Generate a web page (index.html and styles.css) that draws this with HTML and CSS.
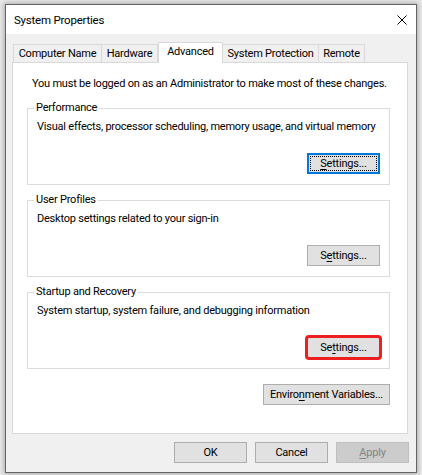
FILE: index.html
```html
<!DOCTYPE html>
<html lang="en">
<head>
<meta charset="utf-8">
<title>System Properties</title>
<link rel="stylesheet" href="styles.css">
</head>
<body>
<div class="window">
  <div class="titlebar">
    <span class="title">System Properties</span>
    <span class="close"><svg width="10" height="10" viewBox="0 0 10 10"><path d="M0.5 0.5 L9.5 9.5 M9.5 0.5 L0.5 9.5" stroke="#000" stroke-width="1" fill="none"/></svg></span>
  </div>
  <div class="client">
    <div class="tabs">
      <div class="tab t-cn">Computer Name</div>
      <div class="tab t-hw">Hardware</div>
      <div class="tab t-adv selected">Advanced</div>
      <div class="tab t-sp">System Protection</div>
      <div class="tab t-re">Remote</div>
    </div>
    <div class="panel">
      <p class="notice">You must be logged on as an Administrator to make most of these changes.</p>
      <fieldset class="group">
        <legend>Performance</legend>
        <p class="desc">Visual effects, processor scheduling, memory usage, and virtual memory</p>
        <div class="row"><button class="btn focus"><span><u>S</u>ettings...</span></button></div>
      </fieldset>
      <fieldset class="group">
        <legend>User Profiles</legend>
        <p class="desc">Desktop settings related to your sign-in</p>
        <div class="row"><button class="btn"><span>S<u>e</u>ttings...</span></button></div>
      </fieldset>
      <fieldset class="group">
        <legend>Startup and Recovery</legend>
        <p class="desc">System startup, system failure, and debugging information</p>
        <div class="row"><button class="btn marked"><span>Se<u>t</u>tings...</span></button></div>
      </fieldset>
      <div class="row env-row"><button class="btn env"><span>Enviro<u>n</u>ment Variables...</span></button></div>
    </div>
    <div class="footer">
      <button class="btn"><span>OK</span></button>
      <button class="btn"><span>Cancel</span></button>
      <button class="btn disabled"><span><u>A</u>pply</span></button>
    </div>
  </div>
</div>
</body>
</html>
```
FILE: styles.css
```css
* { box-sizing: border-box; }
html, body { margin: 0; padding: 0; }
body {
  background: #e9e9e9;
  font-family: Roboto, "Noto Sans", "Liberation Sans", sans-serif;
  font-size: 11px;
  letter-spacing: -0.22px;
  color: #000;
  width: 422px;
  height: 475px;
  overflow: hidden;
}
.window {
  margin: 4px 0 0 5px;
  width: 412px;
  height: 469px;
  border: 1px solid #646464;
  box-shadow: 0 0 5px 1px rgba(0,0,0,0.28);
  background: #f0f0f0;
  display: flex;
  flex-direction: column;
}
.titlebar {
  height: 29px;
  background: #fff;
  display: flex;
  align-items: center;
  justify-content: space-between;
  padding: 0 9px 0 8px;
  flex: none;
}
.title { font-size: 11.5px; line-height: 16px; padding-top: 1px; }
.close { display: flex; width: 10px; height: 10px; }
.close svg { display: block; }
.client {
  flex: 1;
  padding: 8px 0 0 0;
}
.tabs {
  display: flex;
  align-items: flex-end;
  height: 20px;
  margin-left: 7px;
}
.tab {
  height: 18px;
  border: 1px solid #d9d9d9;
  border-bottom: none;
  background: #f0f0f0;
  text-align: center;
  line-height: 16px;
  padding-top: 1px;
  white-space: nowrap;
}
.t-cn { width: 89px; }
.t-hw { width: 57px; margin-left: -1px; }
.t-adv { width: 65px; }
.t-sp { width: 97px; margin-left: -1px; }
.t-re { width: 47px; margin-left: -1px; }
.tab.selected {
  height: 21px;
  margin-bottom: -1px;
  background: #fff;
  position: relative;
  z-index: 1;
  padding-top: 1px;
}
.panel {
  margin-left: 6px;
  width: 396px;
  height: 372px;
  background: #fff;
  border: 1px solid #d9d9d9;
  padding: 13px 0 0 0;
}
.notice {
  margin: 0 0 0 19px;
  line-height: 16px;
  white-space: nowrap;
}
.group {
  margin: 8px 17px 0 14px;
  padding: 0 9px 10px 9px;
  border: 1px solid #dcdcdc;
  min-width: 0;
}
.panel .group:first-of-type { margin-top: 9px; }
.group legend {
  padding: 0 2px;
  margin-left: -3px;
  line-height: 14px;
}
.desc {
  margin: 4px 0 0 0;
  line-height: 16px;
  white-space: nowrap;
}
.row {
  display: flex;
  justify-content: flex-end;
  margin-top: 18px;
}
.btn {
  width: 73px;
  height: 21px;
  padding: 0;
  margin: 0;
  font: inherit;
  letter-spacing: inherit;
  color: #000;
  background: #e1e1e1;
  border: 1px solid #adadad;
  border-radius: 0;
  display: flex;
  align-items: center;
  justify-content: center;
  position: relative;
}
.btn span { line-height: 15px; }
.btn u { text-underline-offset: 2px; text-decoration-thickness: 1px; }
.btn.focus { border: 2px solid #0078d7; }
.btn.focus::after {
  content: "";
  position: absolute;
  inset: 1px;
  border: 1px dotted #000;
}
.btn.marked {
  outline: 3px solid #ee1f1f;
  outline-offset: -1px;
  border-radius: 2px;
}
.env-row { margin: 15px 17px 0 0; }
.btn.env { width: 127px; }
.footer {
  display: flex;
  justify-content: flex-end;
  gap: 8px;
  padding-right: 7px;
  margin-top: 8px;
}
.btn.disabled {
  background: #cccccc;
  border-color: #bfbfbf;
  color: #838383;
}
```
